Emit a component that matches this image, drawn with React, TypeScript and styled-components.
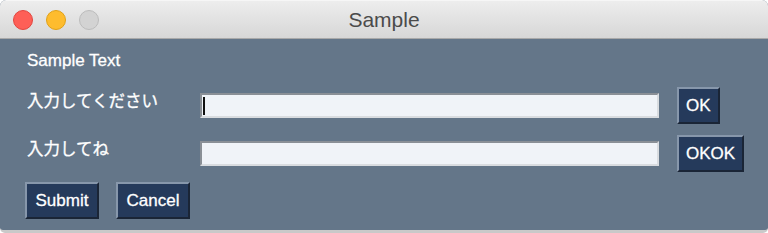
import { createGlobalStyle } from 'styled-components';
import styled from 'styled-components';

const GlobalStyle = createGlobalStyle`
    html, body {
        margin: 0;
        padding: 0;
        background: #ffffff;
    }
    body {
        font-family: 'Liberation Sans', 'Noto Sans CJK JP', sans-serif;
    }
`;

const Window = styled.div`
    width: 768px;
    height: 233px;
    display: flex;
    flex-direction: column;
    border-radius: 6px 6px 5px 5px;
    overflow: hidden;
    background: #647689;
    border-bottom: 3px solid #c9c9c9;
    box-sizing: border-box;
`;

const TitleBar = styled.div`
    height: 39px;
    flex: none;
    display: flex;
    align-items: center;
    position: relative;
    box-sizing: border-box;
    background: linear-gradient(#ededed, #d7d7d7);
    border-top: 1px solid #f6f6f6;
    border-bottom: 1px solid #a9a9a9;
`;

const Lights = styled.div`
    display: flex;
    gap: 13px;
    padding-left: 13px;
`;

const Light = styled.span<{ $fill: string; $edge: string }>`
    width: 20px;
    height: 20px;
    border-radius: 50%;
    box-sizing: border-box;
    background: ${p => p.$fill};
    border: 1px solid ${p => p.$edge};
`;

const Title = styled.div`
    position: absolute;
    left: 0;
    right: 0;
    top: 7px;
    text-align: center;
    font-size: 21px;
    line-height: 24px;
    color: #4b4b4b;
    pointer-events: none;
`;

const Body = styled.div`
    flex: 1;
    display: flex;
    flex-direction: column;
    padding: 12px 0 0 25px;
    color: #ffffff;
    -webkit-text-stroke: 0.3px #ffffff;
`;

const Heading = styled.div`
    font-size: 17px;
    line-height: 20px;
    padding-left: 2px;
    margin-bottom: 16px;
`;

const Row = styled.div<{ $after: number }>`
    display: flex;
    align-items: center;
    margin-bottom: ${p => p.$after}px;
`;

const Label = styled.div`
    align-self: flex-start;
    width: 173px;
    padding-left: 2px;
    font-size: 16.5px;
    line-height: 28px;
    flex: none;
`;

const Field = styled.div<{ $caret?: boolean }>`
    width: 459px;
    height: 25px;
    box-sizing: border-box;
    background: #f0f3f8;
    border: 2px solid;
    border-color: #8a8f96 #d9dce0 #d9dce0 #8a8f96;
    margin-right: 18px;
    position: relative;
    -webkit-text-stroke: 0;

    &::before {
        content: '';
        display: ${p => (p.$caret ? 'block' : 'none')};
        position: absolute;
        left: 1px;
        top: 2px;
        width: 2px;
        height: 18px;
        background: #111;
    }
`;

const Button = styled.button<{ $width?: number }>`
    height: 37px;
    ${p => (p.$width ? `width: ${p.$width}px;` : '')}
    padding: 0 7px;
    box-sizing: border-box;
    background: #253a5b;
    color: #ffffff;
    -webkit-text-stroke: 0.3px #ffffff;
    font-family: 'Liberation Sans', sans-serif;
    font-size: 17px;
    border: 2px solid;
    border-color: #8797ab #1a2536 #1a2536 #8797ab;
    cursor: pointer;
`;

const Actions = styled.div`
    display: flex;
    gap: 17px;
`;

export default function App() {
    return (
        <>
            <GlobalStyle />
            <Window>
                <TitleBar>
                    <Lights>
                        <Light $fill="#fe5f57" $edge="#e2463f" />
                        <Light $fill="#febc2e" $edge="#e1a116" />
                        <Light $fill="#d3d3d3" $edge="#bcbcbc" />
                    </Lights>
                    <Title>Sample</Title>
                </TitleBar>
                <Body>
                    <Heading>Sample Text</Heading>
                    <Row $after={11}>
                        <Label>入力してください</Label>
                        <Field $caret />
                        <Button>OK</Button>
                    </Row>
                    <Row $after={10}>
                        <Label>入力してね</Label>
                        <Field />
                        <Button>OKOK</Button>
                    </Row>
                    <Actions>
                        <Button $width={74}>Submit</Button>
                        <Button $width={74}>Cancel</Button>
                    </Actions>
                </Body>
            </Window>
        </>
    );
}
